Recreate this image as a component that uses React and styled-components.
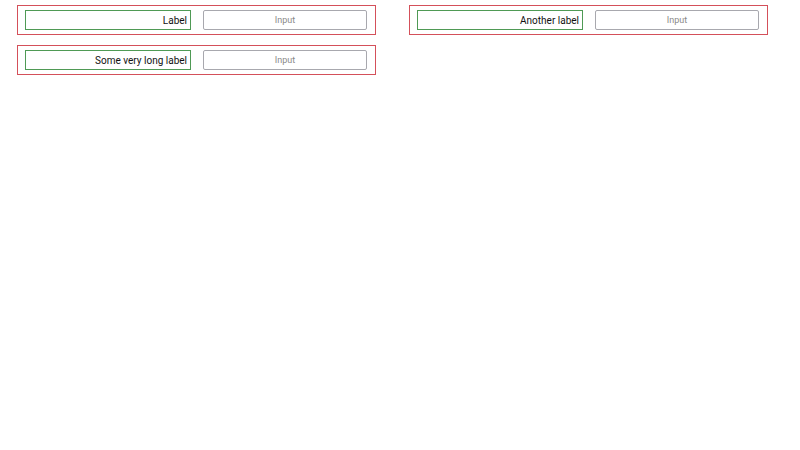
import React from "react";
import styled, { createGlobalStyle } from "styled-components";

const GlobalStyle = createGlobalStyle`
  body {
    margin: 0;
    background: #ffffff;
    font-family: Roboto, "Liberation Sans", sans-serif;
  }
`;

const Grid = styled.div`
  display: grid;
  grid-template-columns: repeat(2, 359px);
  column-gap: 33px;
  row-gap: 10px;
  padding: 5px 17px;
  align-items: start;
`;

const Field = styled.div`
  display: grid;
  grid-template-columns: 166px 164px;
  column-gap: 12px;
  padding: 4px 7px;
  border: 1px solid #d4505a;
  height: 20px;
`;

const Label = styled.label`
  display: flex;
  align-items: center;
  justify-content: flex-end;
  padding: 0 3px;
  border: 1px solid #4f9a55;
  font-size: 10px;
  color: #111111;
  white-space: nowrap;
`;

const Input = styled.input`
  box-sizing: border-box;
  width: 100%;
  height: 20px;
  margin: 0;
  border: 1px solid #a8a8ae;
  border-radius: 2px;
  font-family: Roboto, "Liberation Sans", sans-serif;
  font-size: 9px;
  text-align: center;
  color: #333;
  outline: none;

  &::placeholder {
    color: #8a8a8a;
  }
`;

const fields = ["Label", "Another label", "Some very long label"];

export default function App() {
  return (
    <>
      <GlobalStyle />
      <Grid>
        {fields.map((text) => (
          <Field key={text}>
            <Label>{text}</Label>
            <Input placeholder="Input" />
          </Field>
        ))}
      </Grid>
    </>
  );
}
